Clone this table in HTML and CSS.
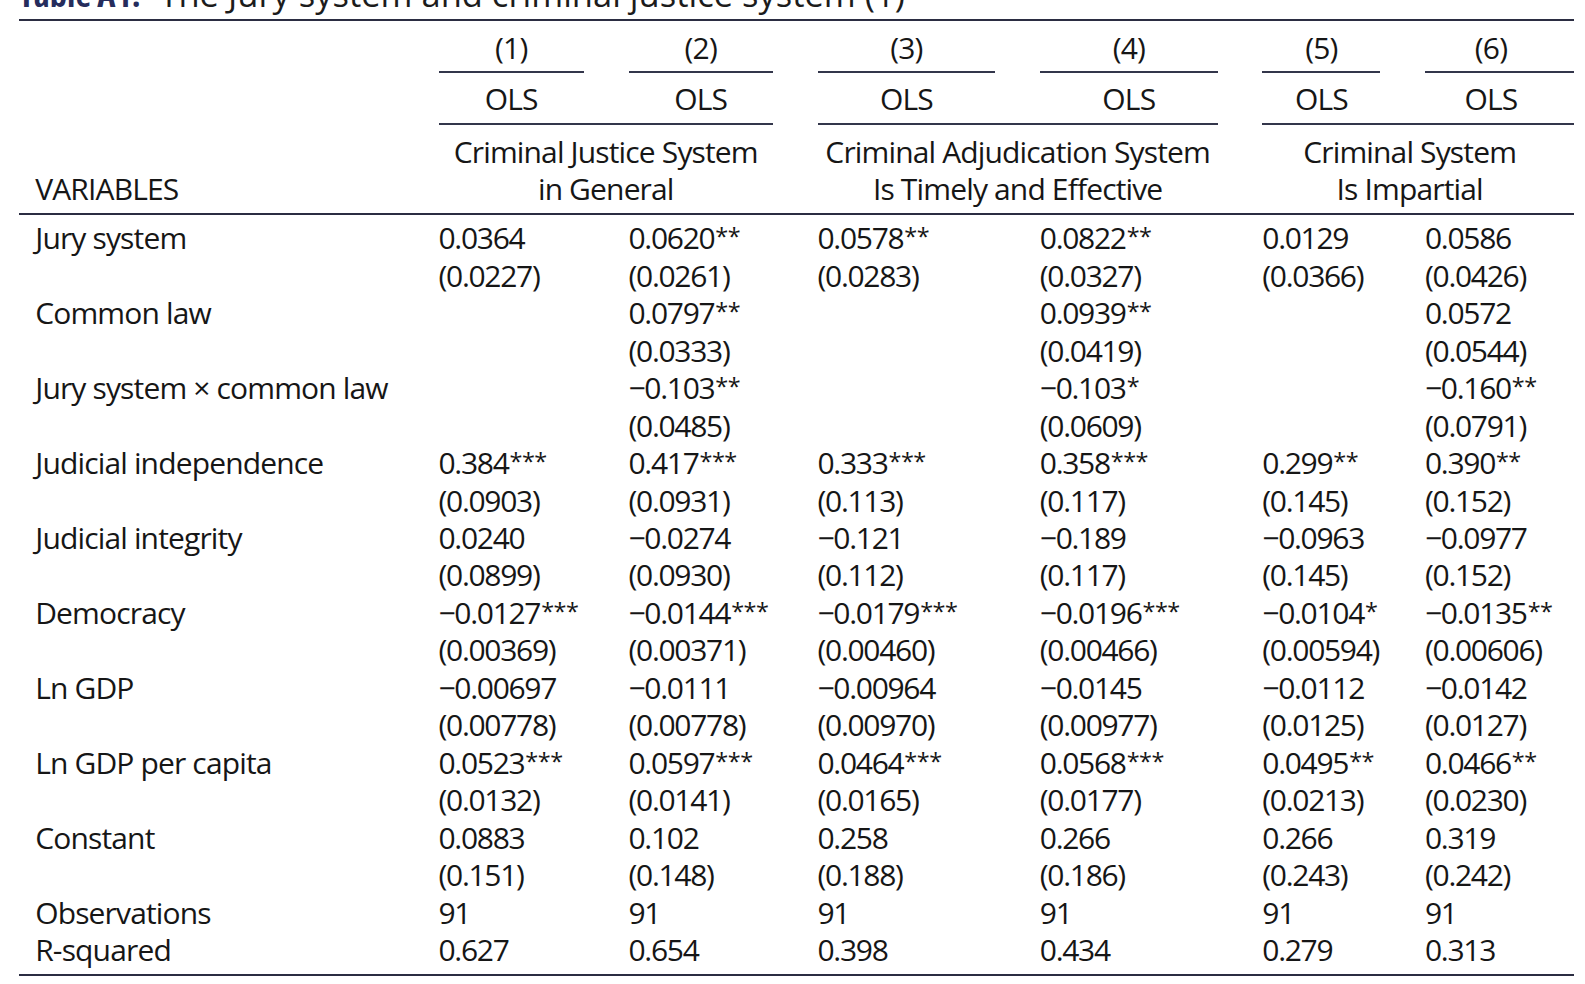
FILE: index.html
```html
<!DOCTYPE html>
<html lang="en">
<head>
<meta charset="utf-8">
<title>Table A1</title>
<link rel="stylesheet" href="styles.css">
</head>
<body>
<div class="title"><span class="tlabel">Table A1.</span> The Jury system and criminal justice system (1)</div>
<div class="tbl">
  <div class="hdr">
    <div class="varlabel">VARIABLES</div>
    <div class="h num-h">(1)</div>
    <div class="h num-h">(2)</div>
    <div class="h num-h">(3)</div>
    <div class="h num-h">(4)</div>
    <div class="h num-h">(5)</div>
    <div class="h num-h last">(6)</div>
    <div class="h">OLS</div>
    <div class="h">OLS</div>
    <div class="h">OLS</div>
    <div class="h">OLS</div>
    <div class="h">OLS</div>
    <div class="h last">OLS</div>
    <div class="grp">Criminal Justice System<br>in General</div>
    <div class="grp">Criminal Adjudication System<br>Is Timely and Effective</div>
    <div class="grp last">Criminal System<br>Is Impartial</div>
  </div>
  <div class="body">
    <div class="lab">Jury system</div><div>0.0364</div><div>0.0620<span class="st">**</span></div><div>0.0578<span class="st">**</span></div><div>0.0822<span class="st">**</span></div><div>0.0129</div><div>0.0586</div>
    <div class="lab"></div><div>(0.0227)</div><div>(0.0261)</div><div>(0.0283)</div><div>(0.0327)</div><div>(0.0366)</div><div>(0.0426)</div>
    <div class="lab">Common law</div><div></div><div>0.0797<span class="st">**</span></div><div></div><div>0.0939<span class="st">**</span></div><div></div><div>0.0572</div>
    <div class="lab"></div><div></div><div>(0.0333)</div><div></div><div>(0.0419)</div><div></div><div>(0.0544)</div>
    <div class="lab">Jury system × common law</div><div></div><div>−0.103<span class="st">**</span></div><div></div><div>−0.103<span class="st">*</span></div><div></div><div>−0.160<span class="st">**</span></div>
    <div class="lab"></div><div></div><div>(0.0485)</div><div></div><div>(0.0609)</div><div></div><div>(0.0791)</div>
    <div class="lab">Judicial independence</div><div>0.384<span class="st">***</span></div><div>0.417<span class="st">***</span></div><div>0.333<span class="st">***</span></div><div>0.358<span class="st">***</span></div><div>0.299<span class="st">**</span></div><div>0.390<span class="st">**</span></div>
    <div class="lab"></div><div>(0.0903)</div><div>(0.0931)</div><div>(0.113)</div><div>(0.117)</div><div>(0.145)</div><div>(0.152)</div>
    <div class="lab">Judicial integrity</div><div>0.0240</div><div>−0.0274</div><div>−0.121</div><div>−0.189</div><div>−0.0963</div><div>−0.0977</div>
    <div class="lab"></div><div>(0.0899)</div><div>(0.0930)</div><div>(0.112)</div><div>(0.117)</div><div>(0.145)</div><div>(0.152)</div>
    <div class="lab">Democracy</div><div>−0.0127<span class="st">***</span></div><div>−0.0144<span class="st">***</span></div><div>−0.0179<span class="st">***</span></div><div>−0.0196<span class="st">***</span></div><div>−0.0104<span class="st">*</span></div><div>−0.0135<span class="st">**</span></div>
    <div class="lab"></div><div>(0.00369)</div><div>(0.00371)</div><div>(0.00460)</div><div>(0.00466)</div><div>(0.00594)</div><div>(0.00606)</div>
    <div class="lab">Ln GDP</div><div>−0.00697</div><div>−0.0111</div><div>−0.00964</div><div>−0.0145</div><div>−0.0112</div><div>−0.0142</div>
    <div class="lab"></div><div>(0.00778)</div><div>(0.00778)</div><div>(0.00970)</div><div>(0.00977)</div><div>(0.0125)</div><div>(0.0127)</div>
    <div class="lab">Ln GDP per capita</div><div>0.0523<span class="st">***</span></div><div>0.0597<span class="st">***</span></div><div>0.0464<span class="st">***</span></div><div>0.0568<span class="st">***</span></div><div>0.0495<span class="st">**</span></div><div>0.0466<span class="st">**</span></div>
    <div class="lab"></div><div>(0.0132)</div><div>(0.0141)</div><div>(0.0165)</div><div>(0.0177)</div><div>(0.0213)</div><div>(0.0230)</div>
    <div class="lab">Constant</div><div>0.0883</div><div>0.102</div><div>0.258</div><div>0.266</div><div>0.266</div><div>0.319</div>
    <div class="lab"></div><div>(0.151)</div><div>(0.148)</div><div>(0.188)</div><div>(0.186)</div><div>(0.243)</div><div>(0.242)</div>
    <div class="lab">Observations</div><div>91</div><div>91</div><div>91</div><div>91</div><div>91</div><div>91</div>
    <div class="lab">R-squared</div><div>0.627</div><div>0.654</div><div>0.398</div><div>0.434</div><div>0.279</div><div>0.313</div>
  </div>
</div>
</body>
</html>
```
FILE: styles.css
```css
html, body {
  margin: 0;
  padding: 0;
  background: #ffffff;
  overflow: hidden;
}
body {
  color: #161616;
  font-family: "Open Sans", "Noto Sans", "DejaVu Sans", sans-serif;
}
.title {
  font-size: 34.5px;
  line-height: 40px;
  margin: -26px 0 5px 19px;
  white-space: nowrap;
  color: #1c1c1c;
}
.tlabel {
  font-weight: 700;
  font-stretch: 75%;
  color: #252c5c;
  margin-right: 10px;
}
.tbl {
  margin-left: 19px;
  width: 1555px;
  font-size: 30px;
  line-height: 37.45px;
  letter-spacing: -0.85px;
  white-space: nowrap;
}
.hdr, .body {
  display: grid;
  grid-template-columns: 419.5px 190px 189px 222.3px 222.5px 162.7px 149px;
}
.hdr {
  border-top: 2px solid #2b2d42;
  border-bottom: 2px solid #2b2d42;
}
.varlabel {
  grid-column: 1;
  grid-row: 1 / span 3;
  align-self: end;
  padding: 0 0 5px 16.2px;
}
.h {
  text-align: center;
  padding: 7.5px 0 5px;
  margin-right: 44.5px;
}
.h.last {
  margin-right: 0;
  padding-right: 17px;
}
.num-h {
  border-bottom: 2px solid #33364b;
}
.grp {
  grid-column: span 2;
  text-align: center;
  border-top: 2px solid #33364b;
  padding: 8px 0 5px;
  margin-right: 44.5px;
}
.grp.last {
  margin-right: 0;
  padding-right: 17px;
}
.body {
  padding: 4.6px 0 5.5px;
  border-bottom: 2px solid #2b2d42;
  letter-spacing: -1.3px;
}
.lab {
  padding-left: 16.2px;
  letter-spacing: -0.85px;
}
.st {
  font-size: 0.78em;
  line-height: 1;
  vertical-align: 0.18em;
  letter-spacing: -0.5px;
  margin-left: 1px;
}
```
